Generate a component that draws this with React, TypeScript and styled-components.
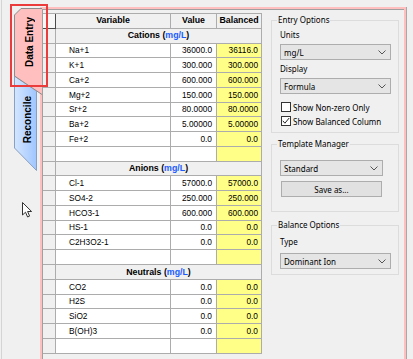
import React from 'react';
import styled, { createGlobalStyle } from 'styled-components';

const GlobalStyle = createGlobalStyle`
    html, body {
        margin: 0;
        padding: 0;
        background: #f0f0f0;
    }
    body {
        font-family: "Liberation Sans", Arial, sans-serif;
        color: #000;
    }
`;

const Window = styled.div`
    position: relative;
    display: flex;
    align-items: flex-start;
    width: 412px;
    height: 359px;
    margin-left: 1px;
    border-left: 1px solid #d4d4d4;
    box-sizing: border-box;
    overflow: hidden;
`;

const TabStrip = styled.div`
    position: relative;
    z-index: 2;
    display: flex;
    flex-direction: column;
    flex-shrink: 0;
    width: 38px;
    padding: 8px 0 0 12px;
    box-sizing: border-box;
`;

const VerticalTab = styled.div<{ $width: number; $height: number; $offset?: number; $layer: number }>`
    position: relative;
    z-index: ${p => p.$layer};
    display: flex;
    align-items: center;
    justify-content: center;
    width: ${p => p.$width}px;
    height: ${p => p.$height}px;
    margin-top: ${p => p.$offset ?? 0}px;
    box-sizing: border-box;
`;

const TabShape = styled.svg`
    position: absolute;
    left: 0;
    top: 0;
    overflow: visible;
`;

const TabLabel = styled.span<{ $shiftY: number; $shiftX?: number }>`
    position: relative;
    writing-mode: vertical-rl;
    transform: rotate(180deg);
    font-family: "Liberation Sans", Arial, sans-serif;
    font-size: 10px;
    font-weight: bold;
    color: #000;
    margin-bottom: ${p => p.$shiftY}px;
    margin-left: ${p => p.$shiftX ?? 0}px;
`;

const Highlight = styled.div`
    position: absolute;
    left: 8px;
    top: 4px;
    width: 38px;
    height: 83px;
    border: 2px solid #ec3b3b;
    box-sizing: border-box;
    z-index: 5;
    pointer-events: none;
`;

const Cursor = styled.svg`
    position: absolute;
    left: 20px;
    top: 202px;
    z-index: 6;
`;

const TabPage = styled.div`
    flex-shrink: 0;
    width: 366px;
    height: 360px;
    margin-top: 7px;
    border: 2px solid #ffbfbf;
    border-bottom: none;
    box-shadow: 1px 0 0 #a8a8a8;
    box-sizing: border-box;
`;

const PageInner = styled.div`
    display: flex;
    align-items: flex-start;
    height: 100%;
    border-top: 1px solid #a0a0a0;
    border-left: 1px solid #a0a0a0;
    box-sizing: border-box;
`;

const Grid = styled.div`
    display: grid;
    grid-template-columns: 13px 115px 46px 45px;
    grid-auto-rows: 14.78px;
    margin-top: 3px;
    border-top: 1px solid #acacac;
    font-family: "Liberation Sans", Arial, sans-serif;
    font-size: 8.3px;
    flex-shrink: 0;
`;

type CellKind = 'corner' | 'head' | 'rowhead' | 'text' | 'value' | 'balanced' | 'section';

const backgrounds: Record<CellKind, string> = {
    corner: '#f7f7f7',
    head: '#f0f0f0',
    rowhead: '#f0f0f0',
    text: '#ffffff',
    value: '#ffffff',
    balanced: '#ffff88',
    section: '#f0f0f0',
};

const Cell = styled.div<{ $kind: CellKind }>`
    display: flex;
    align-items: center;
    justify-content: ${p =>
        p.$kind === 'value' || p.$kind === 'balanced'
            ? 'flex-end'
            : p.$kind === 'head' || p.$kind === 'section'
            ? 'center'
            : 'flex-start'};
    grid-column: ${p => (p.$kind === 'section' ? 'span 3' : 'auto')};
    padding: ${p =>
        p.$kind === 'text' ? '0 0 0 13px' : p.$kind === 'value' ? '0 4px 0 0' : p.$kind === 'balanced' ? '0 3px 0 0' : '0'};
    background: ${p => backgrounds[p.$kind]};
    border-right: 1px solid ${p => (p.$kind === 'corner' ? '#4a4a4a' : '#acacac')};
    border-bottom: 1px solid ${p => (p.$kind === 'corner' ? '#4a4a4a' : '#acacac')};
    font-weight: ${p => (p.$kind === 'head' || p.$kind === 'section' ? 'bold' : 'normal')};
    font-size: ${p => (p.$kind === 'head' || p.$kind === 'section' ? '8.8px' : '8.3px')};
    white-space: nowrap;
    overflow: hidden;
    box-sizing: border-box;
    line-height: 1;
`;

const Unit = styled.span`
    color: #1a5cff;
`;

const SidePanel = styled.div`
    display: flex;
    flex-direction: column;
    flex: 1;
    padding: 10px 5px 0 9px;
    font-family: "Noto Sans", "Open Sans", sans-serif;
    font-size: 8px;
    color: #000;
`;

const GroupBox = styled.div<{ $gap: number; $bottom: number }>`
    position: relative;
    display: flex;
    flex-direction: column;
    margin-top: ${p => p.$gap}px;
    padding: 8px 7px ${p => p.$bottom}px 8px;
    border: 1px solid #dcdcdc;
`;

const GroupTitle = styled.span`
    position: absolute;
    left: 5px;
    top: -7px;
    padding: 0 1px;
    line-height: 12px;
    background: #f0f0f0;
`;

const FieldLabel = styled.div<{ $gap?: number }>`
    margin-top: ${p => p.$gap ?? 0}px;
    line-height: 12px;
`;

const Combo = styled.div<{ $gap: number; $width?: number }>`
    display: flex;
    align-items: center;
    justify-content: space-between;
    height: 16px;
    width: ${p => (p.$width ? `${p.$width}px` : 'auto')};
    margin-top: ${p => p.$gap}px;
    padding: 0 4px 0 3px;
    border: 1px solid #adadad;
    background: #e5e5e5;
    box-sizing: border-box;
`;

const Button = styled.div`
    display: flex;
    align-items: center;
    justify-content: center;
    width: 101px;
    height: 16px;
    margin: 5px 0 0 1px;
    border: 1px solid #adadad;
    background: #e1e1e1;
    box-sizing: border-box;
`;

const CheckRow = styled.div<{ $gap: number }>`
    display: flex;
    align-items: center;
    gap: 2px;
    height: 12px;
    margin-top: ${p => p.$gap}px;
    padding-left: 1px;
`;

const CheckBox = styled.div`
    display: flex;
    align-items: center;
    justify-content: center;
    width: 10px;
    height: 10px;
    border: 1px solid #333;
    background: #fff;
    box-sizing: border-box;
`;

const Chevron = () => (
    <svg width="8" height="5" viewBox="0 0 8 5">
        <polyline points="0.5,0.5 4,4 7.5,0.5" fill="none" stroke="#555" strokeWidth="1" />
    </svg>
);

const Check = ({ checked }: { checked: boolean }) => (
    <CheckBox>
        {checked && (
            <svg width="8" height="8" viewBox="0 0 8 8">
                <polyline points="0.8,3.8 2.9,6.2 7.2,1" fill="none" stroke="#222" strokeWidth="1" />
            </svg>
        )}
    </CheckBox>
);

type Row = [string, string, string];

const sections: { title: string; rows: Row[] }[] = [
    {
        title: 'Cations',
        rows: [
            ['Na+1', '36000.0', '36116.0'],
            ['K+1', '300.000', '300.000'],
            ['Ca+2', '600.000', '600.000'],
            ['Mg+2', '150.000', '150.000'],
            ['Sr+2', '80.0000', '80.0000'],
            ['Ba+2', '5.00000', '5.00000'],
            ['Fe+2', '0.0', '0.0'],
            ['', '', ''],
        ],
    },
    {
        title: 'Anions',
        rows: [
            ['Cl-1', '57000.0', '57000.0'],
            ['SO4-2', '250.000', '250.000'],
            ['HCO3-1', '600.000', '600.000'],
            ['HS-1', '0.0', '0.0'],
            ['C2H3O2-1', '0.0', '0.0'],
            ['', '', ''],
        ],
    },
    {
        title: 'Neutrals',
        rows: [
            ['CO2', '0.0', '0.0'],
            ['H2S', '0.0', '0.0'],
            ['SiO2', '0.0', '0.0'],
            ['B(OH)3', '0.0', '0.0'],
            ['', '', ''],
        ],
    },
];

const EntryGrid = () => (
    <Grid>
        <Cell $kind="corner" />
        <Cell $kind="head">Variable</Cell>
        <Cell $kind="head">Value</Cell>
        <Cell $kind="head">Balanced</Cell>
        {sections.map(section => (
            <React.Fragment key={section.title}>
                <Cell $kind="rowhead" />
                <Cell $kind="section">
                    {section.title}&nbsp;(<Unit>mg/L</Unit>)
                </Cell>
                {section.rows.map((row, i) => (
                    <React.Fragment key={i}>
                        <Cell $kind="rowhead" />
                        <Cell $kind="text">{row[0]}</Cell>
                        <Cell $kind="value">{row[1]}</Cell>
                        <Cell $kind="balanced">{row[2]}</Cell>
                    </React.Fragment>
                ))}
            </React.Fragment>
        ))}
    </Grid>
);

const App: React.FC = () => {
    return (
        <>
            <GlobalStyle />
            <Window>
                <TabStrip>
                    <VerticalTab $width={28} $height={87} $layer={2}>
                        <TabShape width="28" height="87">
                            <polygon points="0.5,7 7,0.5 28,0.5 28,87 0.5,68" fill="#ffbfbf" />
                            <polyline points="28,0.5 7,0.5 0.5,7 0.5,68 28,86.5" fill="none" stroke="#8c8c8c" />
                        </TabShape>
                        <TabLabel $shiftY={18} $shiftX={2}>Data Entry</TabLabel>
                    </VerticalTab>
                    <VerticalTab $width={23} $height={95} $offset={-19} $layer={1}>
                        <TabShape width="23" height="95">
                            <defs>
                                <linearGradient id="reconcileFill" x1="0" y1="0" x2="1" y2="0">
                                    <stop offset="0" stopColor="#d4e6ff" />
                                    <stop offset="1" stopColor="#9fc6ff" />
                                </linearGradient>
                            </defs>
                            <polygon
                                points="0.5,0 22.5,15 22.5,94.5 0.5,72"
                                fill="url(#reconcileFill)"
                                stroke="#8aa0c0"
                            />
                        </TabShape>
                        <TabLabel $shiftY={7} $shiftX={4}>Reconcile</TabLabel>
                    </VerticalTab>
                </TabStrip>
                <Highlight />
                <Cursor width="11" height="17" viewBox="0 0 11 17">
                    <path
                        d="M0.5,0.5 L0.5,13 L3.5,10.2 L5.6,15 L7.6,14.1 L5.6,9.5 L9.6,9.5 Z"
                        fill="#fff"
                        stroke="#333"
                        strokeWidth="1"
                        strokeLinejoin="round"
                    />
                </Cursor>
                <TabPage>
                    <PageInner>
                        <EntryGrid />
                        <SidePanel>
                            <GroupBox $gap={0} $bottom={5}>
                                <GroupTitle>Entry Options</GroupTitle>
                                <FieldLabel>Units</FieldLabel>
                                <Combo $gap={3}>
                                    <span>mg/L</span>
                                    <Chevron />
                                </Combo>
                                <FieldLabel $gap={3}>Display</FieldLabel>
                                <Combo $gap={3}>
                                    <span>Formula</span>
                                    <Chevron />
                                </Combo>
                                <CheckRow $gap={7}>
                                    <Check checked={false} />
                                    <span>Show Non-zero Only</span>
                                </CheckRow>
                                <CheckRow $gap={2}>
                                    <Check checked />
                                    <span>Show Balanced Column</span>
                                </CheckRow>
                            </GroupBox>
                            <GroupBox $gap={11} $bottom={14}>
                                <GroupTitle>Template Manager</GroupTitle>
                                <Combo $gap={7} $width={103}>
                                    <span>Standard</span>
                                    <Chevron />
                                </Combo>
                                <Button>Save as...</Button>
                            </GroupBox>
                            <GroupBox $gap={13} $bottom={5}>
                                <GroupTitle>Balance Options</GroupTitle>
                                <FieldLabel $gap={2}>Type</FieldLabel>
                                <Combo $gap={5}>
                                    <span>Dominant Ion</span>
                                    <Chevron />
                                </Combo>
                            </GroupBox>
                        </SidePanel>
                    </PageInner>
                </TabPage>
            </Window>
        </>
    );
};

export default App;
